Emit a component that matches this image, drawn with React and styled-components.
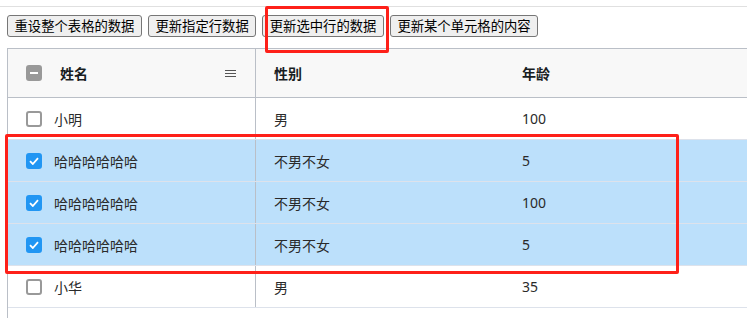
import React from "react";
import styled, { createGlobalStyle } from "styled-components";

const Global = createGlobalStyle`
  html, body { margin: 0; padding: 0; overflow: hidden; background: #fff; }
  body { font-family: "Segoe UI", "Noto Sans", "Noto Sans CJK SC", sans-serif; }
`;

const Page = styled.div`
  position: relative;
  width: 747px;
  height: 318px;
  overflow: hidden;
`;

const TopRule = styled.div`
  height: 6px;
  border-bottom: 1px solid #e0e0e0;
`;

const Toolbar = styled.div`
  display: flex;
  gap: 6px;
  padding: 8px 0 0 7px;
`;

const Button = styled.button`
  height: 22px;
  padding: 0 6.5px;
  margin: 0;
  border: 1px solid #767676;
  border-radius: 3px;
  background: #efefef;
  color: #000;
  font-family: "Noto Sans CJK SC", sans-serif;
  font-size: 13.33px;
  line-height: 20px;
  white-space: nowrap;
`;

const Grid = styled.div`
  margin: 11px 0 0 7px;
  width: 820px;
  height: 300px;
  border-left: 1px solid #babfc7;
  border-top: 1px solid #babfc7;
  font-family: "Segoe UI", "Noto Sans", "Noto Sans CJK SC", sans-serif;
  font-size: 14px;
  color: #222;
`;

const Row = styled.div`
  display: grid;
  grid-template-columns: 248px 248px 1fr;
  height: ${(p) => (p.$header ? 48 : 41)}px;
  background: ${(p) => (p.$header ? "#f8f8f8" : p.$selected ? "#bce0fb" : "#fff")};
  border-bottom: 1px solid ${(p) => (p.$header ? "#babfc7" : "#dde2eb")};
`;

const Cell = styled.div`
  display: flex;
  align-items: center;
  padding: 0 18px;
  gap: ${(p) => (p.$header ? 18 : 12)}px;
  border-right: ${(p) => (p.$pinned ? "1px solid #babfc7" : "none")};
  font-weight: ${(p) => (p.$header ? 600 : 400)};
  color: ${(p) => (p.$header ? "#181d1f" : "#2a2a2a")};
  white-space: nowrap;
`;

const Label = styled.span`
  flex: 1;
`;

const Box = styled.span`
  box-sizing: border-box;
  width: 16px;
  height: 16px;
  flex: none;
  border-radius: 3px;
  border: 2px solid ${(p) => (p.$state === "checked" ? "#2196f3" : "#999")};
  background: ${(p) =>
    p.$state === "checked" ? "#2196f3" : p.$state === "partial" ? "#999" : "#fff"};
  display: flex;
  align-items: center;
  justify-content: center;
`;

const Dash = styled.span`
  width: 8px;
  height: 2px;
  background: #fff;
`;

const MenuIcon = styled.svg`
  flex: none;
  margin-right: 1px;
`;

const Mark = styled.div`
  position: absolute;
  box-sizing: border-box;
  border: 3px solid #fe2019;
  border-radius: 2px;
  pointer-events: none;
`;

function Check({ state }) {
  return (
    <Box $state={state}>
      {state === "checked" && (
        <svg width="10" height="8" viewBox="0 0 10 8">
          <path d="M1 4.2 L3.8 7 L9 1.2" fill="none" stroke="#fff" strokeWidth="1.8" />
        </svg>
      )}
      {state === "partial" && <Dash />}
    </Box>
  );
}

const rows = [
  { name: "小明", sex: "男", age: "100", sel: false },
  { name: "哈哈哈哈哈哈", sex: "不男不女", age: "5", sel: true },
  { name: "哈哈哈哈哈哈", sex: "不男不女", age: "100", sel: true },
  { name: "哈哈哈哈哈哈", sex: "不男不女", age: "5", sel: true },
  { name: "小华", sex: "男", age: "35", sel: false },
];

export default function App() {
  return (
    <Page>
      <Global />
      <TopRule />
      <Toolbar>
        <Button>重设整个表格的数据</Button>
        <Button>更新指定行数据</Button>
        <Button>更新选中行的数据</Button>
        <Button>更新某个单元格的内容</Button>
      </Toolbar>
      <Grid>
        <Row $header>
          <Cell $header $pinned>
            <Check state="partial" />
            <Label>姓名</Label>
            <MenuIcon width="11" height="7" viewBox="0 0 11 7">
              <path d="M0 0.5H11M0 3.5H11M0 6.5H11" stroke="#555" strokeWidth="1" />
            </MenuIcon>
          </Cell>
          <Cell $header>性别</Cell>
          <Cell $header>年龄</Cell>
        </Row>
        {rows.map((r, i) => (
          <Row key={i} $selected={r.sel}>
            <Cell $pinned>
              <Check state={r.sel ? "checked" : "empty"} />
              <span>{r.name}</span>
            </Cell>
            <Cell>{r.sex}</Cell>
            <Cell>{r.age}</Cell>
          </Row>
        ))}
      </Grid>
      <Mark style={{ left: 265, top: 6, width: 124, height: 47 }} />
      <Mark style={{ left: 5, top: 134, width: 674, height: 140 }} />
    </Page>
  );
}
